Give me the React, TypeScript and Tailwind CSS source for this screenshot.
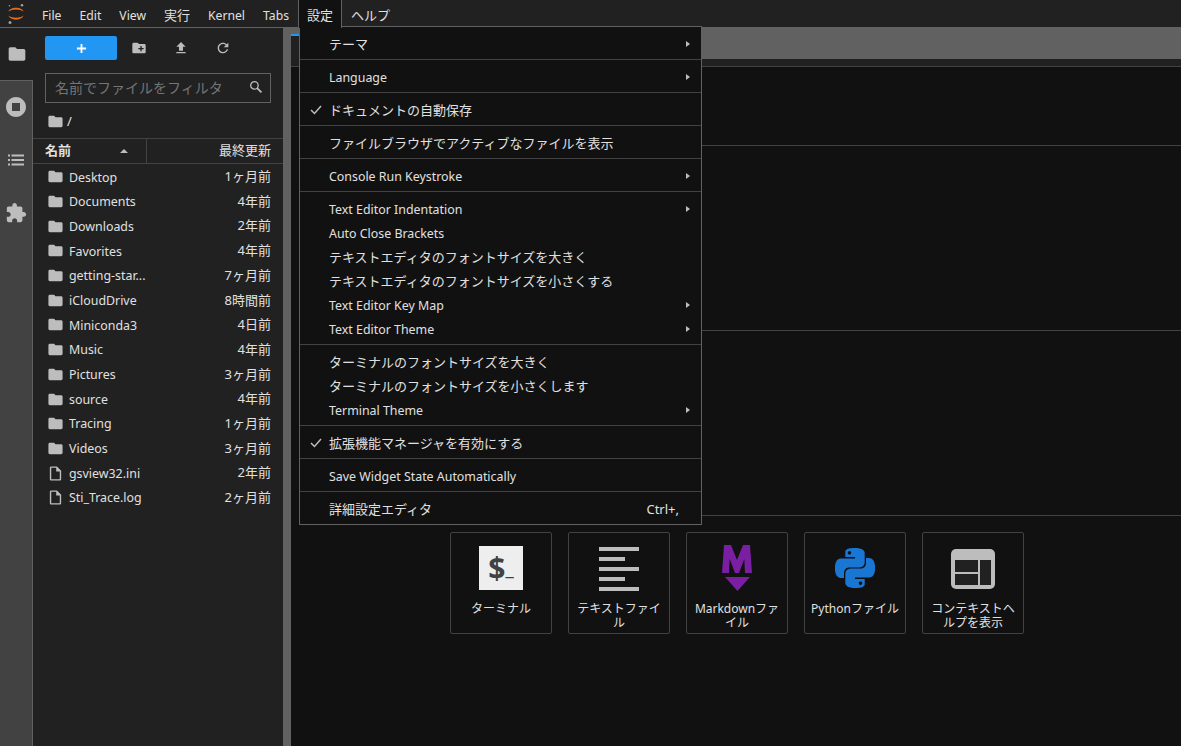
import { SiPython } from "react-icons/si";

const FOLDER = "M10 4H4c-1.1 0-1.99.9-1.99 2L2 18c0 1.1.9 2 2 2h16c1.1 0 2-.9 2-2V8c0-1.1-.9-2-2-2h-8l-2-2z";
const FILE = "M14 2H6c-1.1 0-1.99.9-1.99 2L4 20c0 1.1.89 2 1.99 2H18c1.1 0 2-.9 2-2V8l-6-6zM6 20V4h7v5h5v11H6z";

const topMenus = ["File", "Edit", "View", "実行", "Kernel", "Tabs"];

const files = [
  { name: "Desktop", time: "1ヶ月前", icon: FOLDER },
  { name: "Documents", time: "4年前", icon: FOLDER },
  { name: "Downloads", time: "2年前", icon: FOLDER },
  { name: "Favorites", time: "4年前", icon: FOLDER },
  { name: "getting-star...", time: "7ヶ月前", icon: FOLDER },
  { name: "iCloudDrive", time: "8時間前", icon: FOLDER },
  { name: "Miniconda3", time: "4日前", icon: FOLDER },
  { name: "Music", time: "4年前", icon: FOLDER },
  { name: "Pictures", time: "3ヶ月前", icon: FOLDER },
  { name: "source", time: "4年前", icon: FOLDER },
  { name: "Tracing", time: "1ヶ月前", icon: FOLDER },
  { name: "Videos", time: "3ヶ月前", icon: FOLDER },
  { name: "gsview32.ini", time: "2年前", icon: FILE },
  { name: "Sti_Trace.log", time: "2ヶ月前", icon: FILE },
];

interface MenuItem {
  label: string;
  sub?: boolean;
  check?: boolean;
  key?: string;
}

const menuSections: MenuItem[][] = [
  [{ label: "テーマ", sub: true }],
  [{ label: "Language", sub: true }],
  [{ label: "ドキュメントの自動保存", check: true }],
  [{ label: "ファイルブラウザでアクティブなファイルを表示" }],
  [{ label: "Console Run Keystroke", sub: true }],
  [
    { label: "Text Editor Indentation", sub: true },
    { label: "Auto Close Brackets" },
    { label: "テキストエディタのフォントサイズを大きく" },
    { label: "テキストエディタのフォントサイズを小さくする" },
    { label: "Text Editor Key Map", sub: true },
    { label: "Text Editor Theme", sub: true },
  ],
  [
    { label: "ターミナルのフォントサイズを大きく" },
    { label: "ターミナルのフォントサイズを小さくします" },
    { label: "Terminal Theme", sub: true },
  ],
  [{ label: "拡張機能マネージャを有効にする", check: true }],
  [{ label: "Save Widget State Automatically" }],
  [{ label: "詳細設定エディタ", key: "Ctrl+," }],
];

// latin labels run a bit narrower than the CJK ones in the reference
const isLatin = (s: string) => /^[\x20-\x7e]+$/.test(s);

const Icon = ({ d, className }: { d: string; className: string }) => (
  <svg viewBox="0 0 24 24" className={className} fill="currentColor">
    <path d={d} />
  </svg>
);

const JupyterLogo = () => (
  <svg viewBox="0 0 18 22" className="w-[18px] h-[22px]">
    <path d="M1.5 8.5C3 3.5 15 3.5 16.5 8.5C13.5 5.8 4.5 5.8 1.5 8.5Z" fill="#e46e1e" />
    <path d="M1.5 12.5C4.5 15.5 13.5 15.5 16.5 12.5C15 18 3 18 1.5 12.5Z" fill="#e46e1e" />
    <circle cx="15" cy="2.2" r="1.3" fill="#9e9e9e" />
    <circle cx="2.5" cy="2.8" r="0.8" fill="#9e9e9e" />
    <circle cx="3" cy="19.5" r="1.5" fill="#9e9e9e" />
  </svg>
);

const Launcher = ({ label, children }: { label: string; children: React.ReactNode }) => (
  <div className="w-[102px] h-[102px] border border-[#424242] rounded-[2px] flex flex-col items-center">
    <div className="h-[69px] w-full flex items-center justify-center">{children}</div>
    <div className="w-full px-[4px] text-center text-[12px] leading-[14px] text-[#e0e0e0] break-all">{label}</div>
  </div>
);

const App = () => {
  return (
    <div
      className="relative w-[1181px] h-[746px] overflow-hidden flex flex-col bg-[#111111] text-[13px] text-[#e0e0e0]"
      style={{ fontFamily: '"Noto Sans", "Noto Sans CJK JP", sans-serif' }}
    >
      {/* top menu bar */}
      <div className="h-[28px] shrink-0 flex bg-[#212121] border-b border-[#616161]">
        <div className="w-[33px] pl-[7px] pt-[3px] shrink-0">
          <JupyterLogo />
        </div>
        {topMenus.map((m) => (
          <div key={m} className={`h-[27px] px-[9px] leading-[31px] ${isLatin(m) ? "text-[12.2px]" : ""}`}>
            {m}
          </div>
        ))}
        <div className="relative z-20 h-[28px] px-[8px] leading-[31px] bg-[#111111] border-x border-[#616161]">
          設定
        </div>
        <div className="h-[27px] px-[9px] leading-[31px]">ヘルプ</div>
      </div>

      <div className="flex-1 flex min-h-0">
        {/* activity bar */}
        <div className="w-[33px] shrink-0 flex flex-col text-[#bdbdbd]">
          <div className="h-[52px] shrink-0 bg-[#212121] flex items-center justify-center">
            <Icon d={FOLDER} className="w-[20px] h-[20px]" />
          </div>
          <div className="flex-1 bg-[#424242] border-t border-r border-[#616161] flex flex-col items-center">
            <div className="h-[52px] w-full flex items-center justify-center">
              <Icon
                d="M12 2C6.48 2 2 6.48 2 12s4.48 10 10 10 10-4.48 10-10S17.52 2 12 2zm4 14H8V8h8v8z"
                className="w-[24px] h-[24px]"
              />
            </div>
            <div className="h-[53px] w-full flex items-center justify-center">
              <svg viewBox="0 0 16 12" className="w-[16px] h-[12px]" fill="currentColor">
                <rect x="0" y="0.5" width="2" height="2" />
                <rect x="3.5" y="0.5" width="12.5" height="2" />
                <rect x="0" y="5" width="2" height="2" />
                <rect x="3.5" y="5" width="12.5" height="2" />
                <rect x="0" y="9.5" width="2" height="2" />
                <rect x="3.5" y="9.5" width="12.5" height="2" />
              </svg>
            </div>
            <div className="h-[54px] w-full flex items-center justify-center">
              <Icon
                d="M20.5 11H19V7c0-1.1-.9-2-2-2h-4V3.5C13 2.12 11.88 1 10.5 1S8 2.12 8 3.5V5H4c-1.1 0-1.99.9-1.99 2v3.8H3.5c1.49 0 2.7 1.21 2.7 2.7s-1.21 2.7-2.7 2.7H2V20c0 1.1.9 2 2 2h3.8v-1.5c0-1.49 1.21-2.7 2.7-2.7 1.49 0 2.7 1.21 2.7 2.7V22H17c1.1 0 2-.9 2-2v-4h1.5c1.38 0 2.5-1.12 2.5-2.5S21.88 11 20.5 11z"
                className="w-[22px] h-[22px]"
              />
            </div>
          </div>
        </div>

        {/* file browser */}
        <div className="w-[250px] shrink-0 bg-[#212121] flex flex-col">
          <div className="h-[32px] mt-[8px] px-[12px] flex items-start text-[#bdbdbd]">
            <div className="w-[72px] h-[24px] bg-[#2196f3] rounded-[2px] flex items-center justify-center text-white">
              <svg viewBox="0 0 12 12" className="w-[11px] h-[11px]" fill="currentColor">
                <path d="M5 1h2v4h4v2H7v4H5V7H1V5h4z" />
              </svg>
            </div>
            <div className="w-[42px] h-[24px] flex items-center justify-center ml-[1px]">
              <Icon
                d="M20 6h-8l-2-2H4c-1.1 0-1.99.9-1.99 2L2 18c0 1.1.9 2 2 2h16c1.1 0 2-.9 2-2V8c0-1.1-.9-2-2-2zm-1 8h-3v3h-2v-3h-3v-2h3V9h2v3h3v2z"
                className="w-[16px] h-[16px]"
              />
            </div>
            <div className="w-[42px] h-[24px] flex items-center justify-center">
              <Icon d="M9 16h6v-6h4l-7-7-7 7h4zm-4 2h14v2H5z" className="w-[16px] h-[16px]" />
            </div>
            <div className="w-[42px] h-[24px] flex items-center justify-center">
              <Icon
                d="M17.65 6.35C16.2 4.9 14.21 4 12 4c-4.42 0-7.99 3.58-7.99 8s3.57 8 7.99 8c3.73 0 6.84-2.55 7.73-6h-2.08c-.82 2.33-3.04 4-5.65 4-3.31 0-6-2.69-6-6s2.69-6 6-6c1.66 0 3.14.69 4.22 1.78L13 11h7V4l-2.35 2.35z"
                className="w-[16px] h-[16px]"
              />
            </div>
          </div>
          <div className="mx-[12px] mt-[5px] h-[30px] border border-[#616161] flex items-center justify-between pl-[9px] pr-[7px]">
            <span className="text-[14px] text-[#757575] pb-[1px]">名前でファイルをフィルタ</span>
            <svg viewBox="0 0 18 18" className="w-[14px] h-[14px] mb-[3px] text-[#bdbdbd]" fill="none" stroke="currentColor">
              <circle cx="7" cy="7" r="4.8" strokeWidth="1.7" />
              <path d="M10.5 10.5L16 16" strokeWidth="2.2" />
            </svg>
          </div>
          <div className="h-[35px] pl-[14px] pt-[1px] flex items-center gap-[3px]">
            <Icon d={FOLDER} className="w-[17px] h-[17px] text-[#bdbdbd]" />
            <span className="pt-[2px]">/</span>
          </div>
          <div className="h-[26px] border-y border-[#424242] flex items-center">
            <div className="w-[114px] h-full border-r border-[#424242] pl-[12px] pr-[18px] flex items-center justify-between font-bold">
              <span>名前</span>
              <svg viewBox="0 0 8 4" className="w-[8px] h-[4px] text-[#bdbdbd]" fill="currentColor">
                <path d="M4 0l4 4H0z" />
              </svg>
            </div>
            <div className="flex-1 pr-[12px] text-right">最終更新</div>
          </div>
          <div className="flex flex-col pt-[0.5px]">
            {files.map((f) => (
              <div key={f.name} className="h-[24.7px] pl-[14px] pr-[12px] flex items-center">
                <Icon d={f.icon} className="w-[17px] h-[17px] text-[#bdbdbd] shrink-0" />
                <span className="ml-[5px] flex-1 pt-[2px] text-[12.4px]">{f.name}</span>
                <span>{f.time}</span>
              </div>
            ))}
          </div>
        </div>

        <div className="w-[8px] shrink-0 bg-[#616161]" />

        {/* main area */}
        <div className="flex-1 min-w-0 flex flex-col bg-[#111111]">
          <div className="h-[39px] shrink-0 bg-[#212121] border-b border-[#424242] flex flex-col">
            <div className="h-[31px] bg-[#616161] flex items-end">
              <div className="w-[300px] h-[25px] bg-[#212121] border-t-2 border-[#2196f3]" />
            </div>
          </div>
          <div className="h-[79px] shrink-0 ml-[20px] border-b border-[#424242]" />
          <div className="h-[185px] shrink-0 ml-[20px] border-b border-[#424242]" />
          <div className="h-[185px] shrink-0 ml-[20px] border-b border-[#424242]" />
          <div className="pt-[16px] flex justify-center gap-[16px] pl-[2px]">
            <Launcher label="ターミナル">
              <div className="w-[44px] h-[44px] bg-[#eeeeee] text-[#424242] flex items-center justify-center font-bold leading-none">
                <span className="text-[30px]">$</span>
                <span className="text-[20px]">_</span>
              </div>
            </Launcher>
            <Launcher label="テキストファイル">
              <svg viewBox="0 0 40 44" className="w-[40px] h-[44px] mt-[3px]" fill="#bdbdbd">
                <rect x="0" y="0" width="40" height="4" />
                <rect x="0" y="10" width="26" height="4" />
                <rect x="0" y="20" width="40" height="4" />
                <rect x="0" y="30" width="26" height="4" />
                <rect x="0" y="40" width="40" height="4" />
              </svg>
            </Launcher>
            <Launcher label="Markdownファイル">
              <svg viewBox="0 0 30 46" className="w-[30px] h-[46px]" fill="#7b1fa2">
                <path d="M2 0h7l6 15 6-15h7l2 28h-7l-.7-14L17 28h-4L7.7 14 7 28H0z" />
                <path d="M3 32h25L15.5 46z" />
              </svg>
            </Launcher>
            <Launcher label="Pythonファイル">
              <SiPython className="w-[40px] h-[40px] text-[#1976d2]" />
            </Launcher>
            <Launcher label="コンテキストヘルプを表示">
              <svg viewBox="0 0 44 40" className="w-[44px] h-[40px] mt-[3px]">
                <rect x="0" y="0" width="44" height="40" rx="5" fill="#bdbdbd" />
                <rect x="4" y="11" width="23" height="12" fill="#212121" />
                <rect x="4" y="25" width="23" height="11" fill="#212121" />
                <rect x="29" y="11" width="11" height="25" fill="#212121" />
              </svg>
            </Launcher>
          </div>
        </div>
      </div>

      {/* open settings menu */}
      <div className="absolute z-10 left-[299px] top-[26px] w-[403px] bg-[#111111] border border-[#616161]">
        {menuSections.map((section, i) => (
          <div key={i} className={`py-[4px] ${i > 0 ? "border-t border-[#424242]" : ""}`}>
            {section.map((item) => (
              <div key={item.label} className="relative h-[24px] pl-[29px] pr-[11px] flex items-center justify-between">
                {item.check && (
                  <svg viewBox="0 0 12 10" className="absolute left-[10px] top-[8px] w-[12px] h-[10px] text-[#bdbdbd]" fill="none" stroke="currentColor" strokeWidth="1.5">
                    <path d="M1 5l3.5 3.5L11 1" />
                  </svg>
                )}
                <span className={`pt-[4px] ${isLatin(item.label) ? "text-[12.4px]" : ""}`}>{item.label}</span>
                {item.sub && (
                  <svg viewBox="0 0 4 6" className="w-[4px] h-[6px] mt-[2px] text-[#bdbdbd]" fill="currentColor">
                    <path d="M0 0l4 3-4 3z" />
                  </svg>
                )}
                {item.key && <span className="pt-[4px] mr-[11px]">{item.key}</span>}
              </div>
            ))}
          </div>
        ))}
      </div>
    </div>
  );
};

export default App;
